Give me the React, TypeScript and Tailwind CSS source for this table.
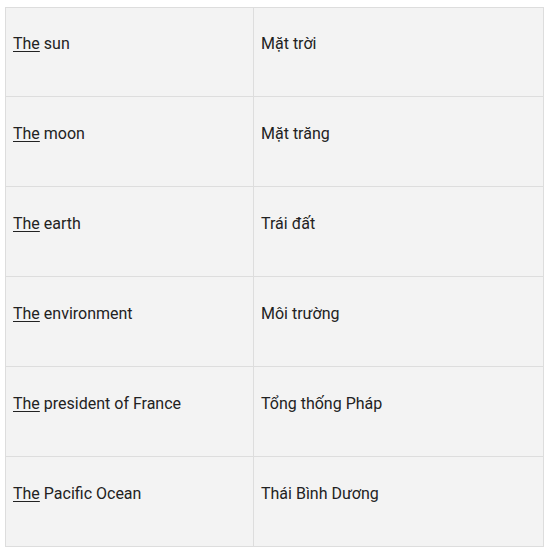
const rows = [
  ["sun", "Mặt trời"],
  ["moon", "Mặt trăng"],
  ["earth", "Trái đất"],
  ["environment", "Môi trường"],
  ["president of France", "Tổng thống Pháp"],
  ["Pacific Ocean", "Thái Bình Dương"],
];

export default function App() {
  return (
    <div className="pl-[5px] pt-[7px] font-['Roboto',sans-serif] text-[16px] text-[#222]">
      <table className="w-[539px] border-collapse bg-[#f3f3f3]">
        <tbody>
          {rows.map(([en, vi], i) => (
            <tr key={en} className={i === 0 ? "h-[89px]" : "h-[90px]"}>
              <td
                className={`w-[248px] border border-[#dddddd] px-[7px] align-top leading-6 ${
                  i === 0 ? "pt-[24px]" : "pt-[25px]"
                }`}
              >
                <span className="underline underline-offset-2">The</span> {en}
              </td>
              <td
                className={`border border-[#dddddd] px-[7px] align-top leading-6 ${
                  i === 0 ? "pt-[24px]" : "pt-[25px]"
                }`}
              >
                {vi}
              </td>
            </tr>
          ))}
        </tbody>
      </table>
    </div>
  );
}
